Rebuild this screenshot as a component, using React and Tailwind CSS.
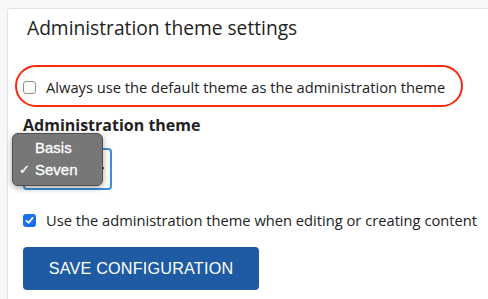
import React from "react";

function Box({ checked }) {
  if (checked) {
    return (
      <span className="w-[13px] h-[13px] rounded-[3px] bg-[#1a6ff0] flex items-center justify-center shrink-0">
        <svg width="9" height="9" viewBox="0 0 9 9">
          <path d="M1.5 4.8 L3.6 6.9 L7.6 1.9" fill="none" stroke="white" strokeWidth="1.8" strokeLinecap="round" strokeLinejoin="round" />
        </svg>
      </span>
    );
  }
  return <span className="w-[13px] h-[13px] rounded-[3px] border border-[#8e8e8e] bg-white shrink-0" />;
}

export default function App() {
  return (
    <div className="w-[488px] h-[299px] bg-[#f7f7f7] pt-[8px] pl-[7px] overflow-hidden relative font-['Open_Sans',sans-serif] text-[#222]">
      <div className="bg-white border-l border-t border-[#e3e3e3] rounded-tl-[4px] h-[400px] w-[600px] pt-[5px]">
        <div className="pl-[19px] text-[19.2px] leading-[28px]">Administration theme settings</div>

        <div className="mt-[35px] pl-[15px] flex items-center gap-[10px] text-[14.7px] leading-[20px]">
          <Box />
          <span>Always use the default theme as the administration theme</span>
        </div>

        <div className="mt-[18px] pl-[15px] text-[16px] leading-[20px] font-bold">Administration theme</div>

        <div className="mt-[13px] ml-[15px] w-[89px] h-[42px] rounded-[4px] border-2 border-[#3a8fd6] flex items-center justify-end pr-[5px]">
          <svg width="8" height="6" viewBox="0 0 8 6">
            <path d="M1 1.5 L4 4.5 L7 1.5" fill="none" stroke="#222" strokeWidth="1.5" />
          </svg>
        </div>

        <div className="mt-[20px] pl-[15px] flex items-center gap-[10px] text-[14.7px] leading-[20px]">
          <Box checked />
          <span>Use the administration theme when editing or creating content</span>
        </div>

        <div className="mt-[17px] ml-[15px] w-[236px] h-[43px] rounded-[4px] bg-[#1e5ba3] flex items-center justify-center text-white text-[16.2px] tracking-[0.2px] font-['Liberation_Sans',Arial,sans-serif]">
          SAVE CONFIGURATION
        </div>
      </div>

      <div className="absolute left-[15px] top-[65px] w-[448px] h-[42px] rounded-full border-2 border-[#f8290c]" />

      <div className="absolute left-[12px] top-[133px] w-[91px] h-[53px] rounded-[6px] bg-[#777777] border border-[#4f4f4f] shadow-[0_2px_6px_rgba(0,0,0,0.35)] text-white text-[15px] leading-[22px] font-['Liberation_Sans',Arial,sans-serif] pt-[3px] [-webkit-text-stroke:0.3px_white]">
        <div className="pl-[22px]">Basis</div>
        <div className="flex items-center">
          <span className="w-[22px] pl-[6px] text-[13px]">✓</span>
          <span>Seven</span>
        </div>
      </div>
    </div>
  );
}
